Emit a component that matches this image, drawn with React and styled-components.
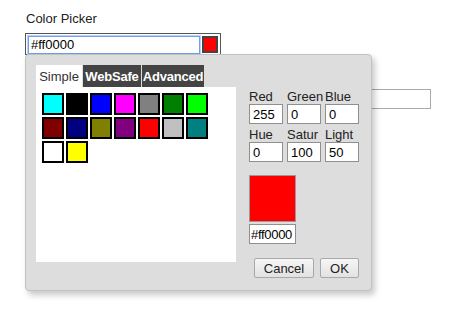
import styled, { createGlobalStyle } from "styled-components";

const GlobalStyle = createGlobalStyle`
  body {
    margin: 0;
    background: #fff;
    font-family: "Liberation Sans", Arial, sans-serif;
    font-size: 13px;
    color: #222;
  }
`;

const simpleColors = [
  "#00ffff", "#000000", "#0000ff", "#ff00ff", "#808080", "#008000", "#00ff00",
  "#800000", "#000080", "#808000", "#800080", "#ff0000", "#c0c0c0", "#008080",
  "#ffffff", "#ffff00",
];

const tabs = [
  { name: "Simple", width: 46 },
  { name: "WebSafe", width: 58 },
  { name: "Advanced", width: 62 },
];

const fields = [
  { label: "Red", value: "255" },
  { label: "Green", value: "0" },
  { label: "Blue", value: "0" },
  { label: "Hue", value: "0" },
  { label: "Satur", value: "100" },
  { label: "Light", value: "50" },
];

function App() {
  return (
    <Page>
      <GlobalStyle />
      <Label>Color Picker</Label>
      <PickerField>
        <HexInput defaultValue="#ff0000" spellCheck />
        <CurrentSwatch color="#ff0000" />
      </PickerField>
      <OtherInput />

      <Popup>
        <LeftColumn>
          <Tabs>
            {tabs.map((t, i) => (
              <Tab key={t.name} active={i === 0} width={t.width}>
                {t.name}
              </Tab>
            ))}
          </Tabs>
          <Panel>
            {simpleColors.map((c) => (
              <Swatch key={c} color={c} />
            ))}
          </Panel>
        </LeftColumn>

        <RightColumn>
          <FieldGrid>
            {fields.map((f) => (
              <FieldCell key={f.label}>
                <SmallLabel>{f.label}</SmallLabel>
                <SmallInput defaultValue={f.value} />
              </FieldCell>
            ))}
          </FieldGrid>
          <Preview color="#ff0000" />
          <PreviewInput defaultValue="#ff0000" />
          <Buttons>
            <Button width={60}>Cancel</Button>
            <Button width={39}>OK</Button>
          </Buttons>
        </RightColumn>
      </Popup>
    </Page>
  );
}

export default App;

const Page = styled.div`
  position: relative;
  width: 452px;
  height: 320px;
  padding: 11px 0 0 25px;
  box-sizing: border-box;
`;

const Label = styled.div`
  line-height: 15px;
  margin-bottom: 7px;
  padding-left: 1px;
`;

const PickerField = styled.div`
  display: flex;
  align-items: center;
  gap: 2px;
  width: 196px;
  height: 22px;
  box-sizing: border-box;
  border: 1px solid #555;
  padding: 1px 2px 0 2px;
`;

const HexInput = styled.input`
  width: 172px;
  height: 18px;
  box-sizing: border-box;
  border: 1px solid #6e9fec;
  box-shadow: 0 0 0 1px #bcd3f7;
  outline: none;
  padding: 0 2px;
  font: 13px "Liberation Sans", Arial, sans-serif;
  color: #000;
`;

const CurrentSwatch = styled.div`
  width: 17px;
  height: 17px;
  box-sizing: border-box;
  border: 2px solid #444;
  background: ${(p) => p.color};
`;

const OtherInput = styled.div`
  margin-top: 34px;
  width: 406px;
  height: 20px;
  box-sizing: border-box;
  border: 1px solid #aaa;
`;

const Popup = styled.div`
  position: absolute;
  left: 25px;
  top: 54px;
  width: 347px;
  height: 237px;
  box-sizing: border-box;
  display: flex;
  gap: 13px;
  padding: 10px 0 0 10px;
  background: #dddddd;
  border: 1px solid #c2c2c2;
  border-radius: 4px;
  box-shadow: 3px 4px 6px rgba(0, 0, 0, 0.22);
`;

const LeftColumn = styled.div`
  display: flex;
  flex-direction: column;
  width: 200px;
`;

const Tabs = styled.div`
  display: flex;
  gap: 1px;
  height: 22px;
`;

const Tab = styled.div`
  display: flex;
  align-items: center;
  justify-content: center;
  width: ${(p) => p.width}px;
  white-space: nowrap;
  overflow: hidden;
  background: ${(p) => (p.active ? "#fff" : "#444")};
  color: ${(p) => (p.active ? "#333" : "#fff")};
  font-weight: ${(p) => (p.active ? "normal" : "bold")};
  letter-spacing: ${(p) => (p.active ? "0" : "-0.2px")};
  line-height: 15px;
`;

const Panel = styled.div`
  display: grid;
  grid-template-columns: repeat(7, 22px);
  grid-auto-rows: 22px;
  gap: 2px;
  align-content: start;
  height: 175px;
  box-sizing: border-box;
  padding: 6px;
  background: #fff;
`;

const Swatch = styled.div`
  box-sizing: border-box;
  border: 2px solid #000;
  background: ${(p) => p.color};
`;

const RightColumn = styled.div`
  display: flex;
  flex-direction: column;
  width: 110px;
  padding-top: 25px;
`;

const FieldGrid = styled.div`
  display: grid;
  grid-template-columns: repeat(3, 34px);
  column-gap: 4px;
  row-gap: 4px;
`;

const FieldCell = styled.div`
  display: flex;
  flex-direction: column;
`;

const SmallLabel = styled.div`
  line-height: 14px;
  color: #222;
`;

const SmallInput = styled.input`
  width: 34px;
  height: 20px;
  box-sizing: border-box;
  border: 1px solid #8f8f8f;
  padding: 0 3px;
  font: 13px "Liberation Sans", Arial, sans-serif;
  color: #000;
  outline: none;
`;

const Preview = styled.div`
  margin-top: 13px;
  width: 47px;
  height: 47px;
  box-sizing: border-box;
  border: 1px solid #999;
  background: ${(p) => p.color};
`;

const PreviewInput = styled.input`
  margin-top: 2px;
  width: 47px;
  height: 20px;
  box-sizing: border-box;
  border: 1px solid #8f8f8f;
  padding: 0 1px;
  font: 13px "Liberation Sans", Arial, sans-serif;
  letter-spacing: -0.3px;
  color: #000;
  outline: none;
`;

const Buttons = styled.div`
  display: flex;
  justify-content: flex-end;
  gap: 6px;
  margin-top: 14px;
`;

const Button = styled.button`
  width: ${(p) => p.width}px;
  height: 20px;
  padding: 0;
  box-sizing: border-box;
  border: 1px solid #a8a8a8;
  border-radius: 2px;
  background: linear-gradient(#f6f6f6, #e2e2e2);
  font: 13px "Liberation Sans", Arial, sans-serif;
  color: #222;
`;
